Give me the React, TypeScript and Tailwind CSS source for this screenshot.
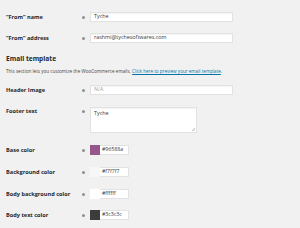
import React from 'react';

const font = { fontFamily: '"Open Sans", "Liberation Sans", sans-serif' };

function HelpDot() {
  return <span className="block w-[3px] h-[3px] rounded-full bg-[#8f8f8f] shrink-0" />;
}

function Label({ children }: { children: React.ReactNode }) {
  return (
    <div className="w-[76px] shrink-0 text-[5.6px] font-bold text-[#23282d] leading-[8px]">
      {children}
    </div>
  );
}

function TextField({ value, placeholder }: { value?: string; placeholder?: string }) {
  return (
    <div className="ml-[5px] w-[143px] h-[10px] bg-white border border-[#e2e2e2] shadow-[inset_0_1px_1px_rgba(0,0,0,0.05)] flex items-center px-[3px] text-[5.4px] leading-none">
      {value ? (
        <span className="text-[#32373c]">{value}</span>
      ) : (
        <span className="text-[#a0a5aa]">{placeholder}</span>
      )}
    </div>
  );
}

function ColorField({ color, value }: { color: string; value: string }) {
  return (
    <div className="ml-[5px] flex h-[10px] bg-white border border-[#e2e2e2] w-[39px]">
      <span className="block w-[10px] h-full -ml-px -my-px box-content" style={{ background: color, height: 10 }} />
      <span className="flex items-center pl-[2px] text-[5.2px] leading-none text-[#32373c]">{value}</span>
    </div>
  );
}

function Row({ label, children, className = '' }: { label: string; children: React.ReactNode; className?: string }) {
  return (
    <div className={`flex items-center ${className}`}>
      <Label>{label}</Label>
      <HelpDot />
      {children}
    </div>
  );
}

export default function App() {
  return (
    <div className="w-[300px] h-[228px] bg-[#f1f1f1] overflow-hidden px-[6px] pt-[12px]" style={font}>
      <Row label="“From” name">
        <TextField value="Tyche" />
      </Row>
      <Row label="“From” address" className="mt-[11px]">
        <TextField value="rashmi@tychesoftwares.com" />
      </Row>

      <h2 className="mt-[12px] text-[6.6px] font-bold text-[#23282d] leading-[8px]">Email template</h2>
      <p className="mt-[5px] text-[4.6px] leading-[6px] text-[#444] whitespace-nowrap">
        This section lets you customize the WooCommerce emails.{' '}
        <span className="text-[#0073aa] underline">Click here to preview your email template</span>.
      </p>

      <Row label="Header Image" className="mt-[11px]">
        <TextField placeholder="N/A" />
      </Row>

      <div className="flex items-start mt-[12px]">
        <Label>Footer text</Label>
        <div className="mt-[3px]">
          <HelpDot />
        </div>
        <div className="relative ml-[5px] w-[107px] h-[26px] bg-white border border-[#e2e2e2] shadow-[inset_0_1px_1px_rgba(0,0,0,0.05)] px-[3px] pt-[3px] text-[5.4px] leading-none text-[#32373c]">
          Tyche
          <svg className="absolute right-[1px] bottom-[1px]" width="3" height="3" viewBox="0 0 3 3">
            <path d="M3 0 L0 3 M3 1.5 L1.5 3" stroke="#999" strokeWidth="0.6" />
          </svg>
        </div>
      </div>

      <Row label="Base color" className="mt-[12px]">
        <ColorField color="#96588a" value="#96588a" />
      </Row>
      <Row label="Background color" className="mt-[12px]">
        <ColorField color="#f7f7f7" value="#f7f7f7" />
      </Row>
      <Row label="Body background color" className="mt-[12px]">
        <ColorField color="#ffffff" value="#ffffff" />
      </Row>
      <Row label="Body text color" className="mt-[11px]">
        <ColorField color="#3c3c3c" value="#3c3c3c" />
      </Row>
    </div>
  );
}
